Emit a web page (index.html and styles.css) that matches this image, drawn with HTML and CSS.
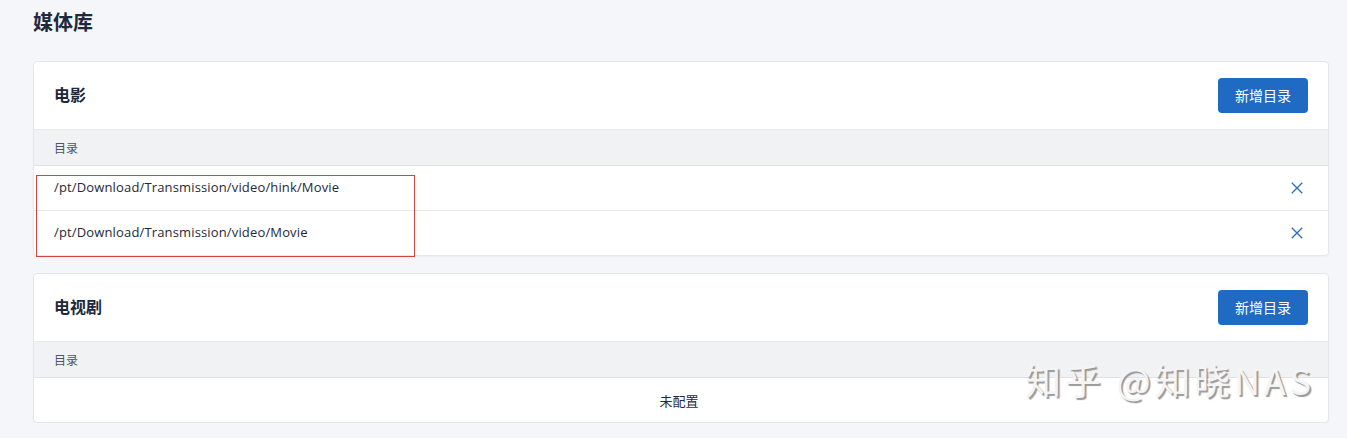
FILE: index.html
```html
<!DOCTYPE html>
<html>
  <head>
    <meta http-equiv="Content-Type" content="text/html; charset=utf-8">
    <link rel="stylesheet" href="styles.css">
  </head>
  <body>
    <div class="page">
      <h2 class="page-title">媒体库</h2>

      <div class="card">
        <div class="card-head">
          <h3 class="card-title">电影</h3>
          <button class="btn">新增目录</button>
        </div>
        <div class="table-head">目录</div>
        <div class="marked">
          <div class="row"><span class="path">/pt/Download/Transmission/video/hink/Movie</span>
            <svg class="del" viewBox="0 0 16 16"><path d="M2 2L14 14M14 2L2 14"/></svg></div>
          <div class="row"><span class="path">/pt/Download/Transmission/video/Movie</span>
            <svg class="del" viewBox="0 0 16 16"><path d="M2 2L14 14M14 2L2 14"/></svg></div>
          <div class="redbox"></div>
        </div>
      </div>

      <div class="card">
        <div class="card-head">
          <h3 class="card-title">电视剧</h3>
          <button class="btn">新增目录</button>
        </div>
        <div class="table-head">目录</div>
        <div class="row empty">未配置</div>
        <div class="watermark">知乎 @知晓NAS</div>
      </div>
    </div>
  </body>
</html>
```

FILE: styles.css
```css
html, body { margin: 0; padding: 0; background: #f5f6f9; }
body { font-family: "Open Sans", "Noto Sans CJK SC", sans-serif; color: #1f2937; overflow: hidden; }
.page { padding: 6px 18px 0 33px; display: flex; flex-direction: column; gap: 17px; }
.page-title { margin: 0; height: 38px; font-size: 20px; line-height: 32px; font-weight: 700; font-family: "Noto Sans CJK SC", sans-serif; color: #1e293b; }

.card { position: relative; background: #fff; border: 1px solid #e4e7eb; border-radius: 4px; box-shadow: 0 1px 2px rgba(0,0,0,0.04); }
.card-head { height: 67px; display: flex; align-items: center; justify-content: space-between; padding: 0 20px; }
.card-title { margin: 0 0 3px; font-size: 16px; font-weight: 700; font-family: "Noto Sans CJK SC", sans-serif; color: #1e293b; }
.btn { width: 90px; height: 35px; border: 0; border-radius: 4px; background: #1f6bc3; color: #fff; font-size: 14px; font-family: "Noto Sans CJK SC", sans-serif; padding: 0 0 2px; }

.table-head { height: 35px; line-height: 35px; padding: 0 20px; background: #f1f2f4; border-top: 1px solid #e6e8eb; border-bottom: 1px solid #dfe2e6; font-size: 12px; color: #4b5563; font-family: "Noto Sans CJK SC", sans-serif; }

.marked { position: relative; }
.row { height: 44px; display: flex; align-items: center; justify-content: space-between; padding: 0 24px 0 20px; font-size: 13px; color: #1f2937; }
.row + .row { border-top: 1px solid #e6e8eb; }
.path { letter-spacing: 0.15px; margin-bottom: 2px; }
.del { width: 14px; height: 14px; stroke: #2f6fc0; stroke-width: 1.6; fill: none; }
.empty { justify-content: center; font-family: "Noto Sans CJK SC", sans-serif; }

.redbox { position: absolute; left: 2px; top: 9px; width: 377px; height: 80px; border: 1px solid #d0453f; pointer-events: none; }

.watermark { position: absolute; left: 991px; top: 79px; font-size: 36px; letter-spacing: 3.8px; color: #f4f4f4; font-family: "Noto Sans CJK SC", sans-serif; text-shadow: 2px 2px 1px #9a9a9a; white-space: nowrap; }
```
